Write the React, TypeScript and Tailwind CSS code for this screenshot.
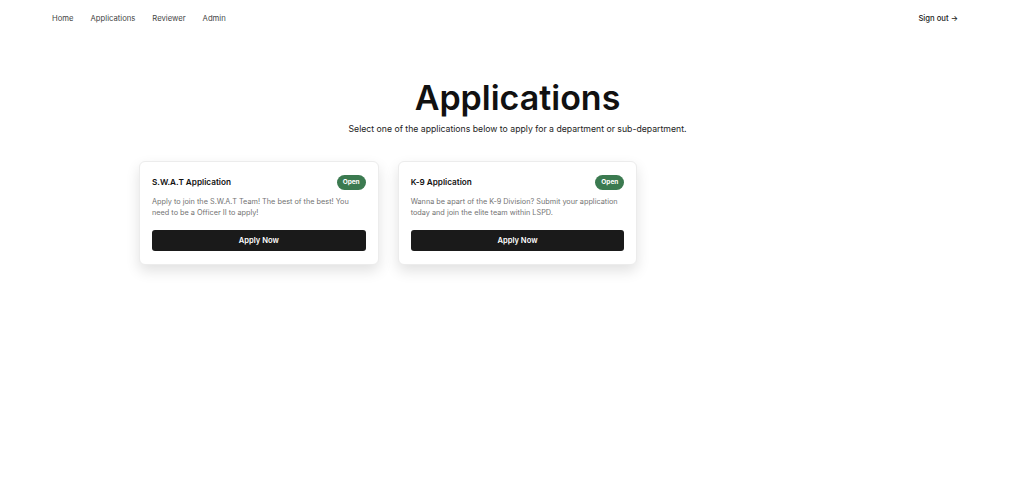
const links = ["Home", "Applications", "Reviewer", "Admin"];

const apps = [
  {
    title: "S.W.A.T Application",
    text: "Apply to join the S.W.A.T Team! The best of the best! You need to be a Officer II to apply!",
  },
  {
    title: "K-9 Application",
    text: "Wanna be apart of the K-9 Division? Submit your application today and join the elite team within LSPD.",
  },
];

export default function App() {
  return (
    <div className="min-h-screen bg-white text-[#111] font-['Inter',sans-serif]">
      <nav className="flex items-center justify-between h-[37px] pl-[52px] pr-[77px]">
        <div className="flex gap-[17px] text-[7.7px] text-[#444]">
          {links.map((l) => (
            <a key={l} href="#">{l}</a>
          ))}
        </div>
        <a href="#" className="text-[7.7px] font-medium text-[#222]">Sign out →</a>
      </nav>

      <main className="flex flex-col items-center">
        <h1 className="mt-[41px] text-[34px] leading-[40px] font-semibold">Applications</h1>
        <p className="mt-[5px] text-[8.7px] text-[#222]">
          Select one of the applications below to apply for a department or sub-department.
        </p>

        <div className="mt-[25px] grid grid-cols-3 gap-[19px] w-[757px]">
          {apps.map((a) => (
            <div
              key={a.title}
              className="rounded-[6px] border border-[#ececec] bg-white px-[12px] pt-[13px] pb-[13px] shadow-[0_6px_14px_rgba(0,0,0,0.12)]"
            >
              <div className="flex items-center justify-between">
                <h3 className="text-[8.2px] font-semibold">{a.title}</h3>
                <span className="rounded-full bg-[#3b7a50] px-[6px] py-[2.5px] text-[6.5px] font-bold text-white">Open</span>
              </div>
              <p className="mt-[6px] text-[7.3px] leading-[11px] text-[#737373]">{a.text}</p>
              <button className="mt-[12px] h-[21.5px] w-full rounded-[3px] bg-[#1a1a1a] text-[7.6px] font-semibold text-white">
                Apply Now
              </button>
            </div>
          ))}
        </div>
      </main>
    </div>
  );
}
